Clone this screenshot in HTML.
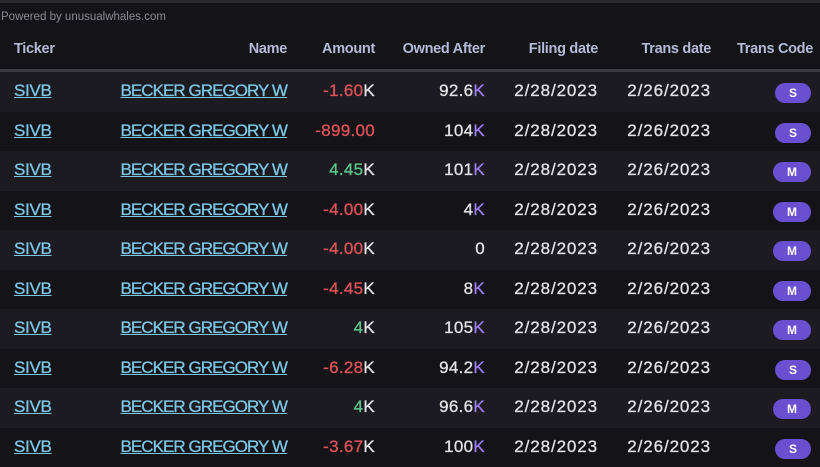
<!DOCTYPE html>
<html><head><style>
body{margin:0;width:820px;height:460px;background:#141318;overflow:hidden;font-family:"Liberation Sans",sans-serif;position:relative}
.top{position:absolute;left:0;top:0;width:820px;height:3px;background:#2a2930}
.pw{position:absolute;left:1px;top:11px;font-size:11.5px;color:#8a8a94}
.hd{position:absolute;top:41px;height:20px;font-size:14.5px;font-weight:bold;color:#b4bbd6;letter-spacing:-0.3px}
.hl{position:absolute;left:0;top:69px;width:820px;height:3px;background:#3a3944}
.row{position:absolute;left:0;width:820px;height:39.5px}
.c{position:absolute;font-size:17px;line-height:20px;color:#e2e2e6;white-space:nowrap;letter-spacing:0.3px;-webkit-text-stroke:0.3px currentColor}
.nm{letter-spacing:-0.95px}
.dt{letter-spacing:0.9px}
.r{text-align:right}
a{color:#7cc6e4;text-decoration:underline}
.red{color:#e0535a}.grn{color:#5cc78a}.k{color:#9b7ef0}
.b{position:absolute;height:20px;border-radius:10px;background:#6a4fd0;color:#fff;font-size:12px;font-weight:bold;text-align:center;line-height:20px}
</style></head><body>
<div class="top"></div>
<div class="pw">Powered by unusualwhales.com</div>
<div class="hd" style="left:14px">Ticker</div>
<div class="hd" style="right:533px">Name</div>
<div class="hd" style="right:445px">Amount</div>
<div class="hd" style="right:335px">Owned After</div>
<div class="hd" style="right:222px">Filing date</div>
<div class="hd" style="right:109px">Trans date</div>
<div class="hd" style="right:7px">Trans Code</div>
<div class="hl"></div>
<div id="rows"></div>
<script>
var d=[["-1.60","red","92.6","K","S"],["-899.00","red","104","K","S"],["4.45","grn","101","K","M"],["-4.00","red","4","K","M"],["-4.00","red","0","","M"],["-4.45","red","8","K","M"],["4","grn","105","K","M"],["-6.28","red","94.2","K","S"],["4","grn","96.6","K","M"],["-3.67","red","100","K","S"]];
var h="";
d.forEach(function(r,i){
var t=72+i*39.5;var bg=i%2==0?"#1c1b21":"#141318";
var amt=r[0]=="-899.00"?'<span class="red">-899.00</span>':'<span class="'+r[1]+'">'+r[0]+'</span>K';
var w=r[4]=="M"?38:36;var l=r[4]=="M"?773:775;
h+='<div class="row" style="top:'+t+'px;background:'+bg+'">'+
'<div class="c" style="left:14px;top:9px;letter-spacing:-0.3px"><a>SIVB</a></div>'+
'<div class="c r nm" style="right:533px;top:9px"><a>BECKER GREGORY W</a></div>'+
'<div class="c r" style="right:445px;top:9px">'+amt+'</div>'+
'<div class="c r" style="right:335px;top:9px">'+r[2]+'<span class="k">'+r[3]+'</span></div>'+
'<div class="c r dt" style="right:222px;top:9px">2/28/2023</div>'+
'<div class="c r dt" style="right:109px;top:9px">2/26/2023</div>'+
'<div class="b" style="left:'+l+'px;width:'+w+'px;top:11px">'+r[4]+'</div></div>';
});
document.getElementById("rows").innerHTML=h;
</script>
</body></html>
